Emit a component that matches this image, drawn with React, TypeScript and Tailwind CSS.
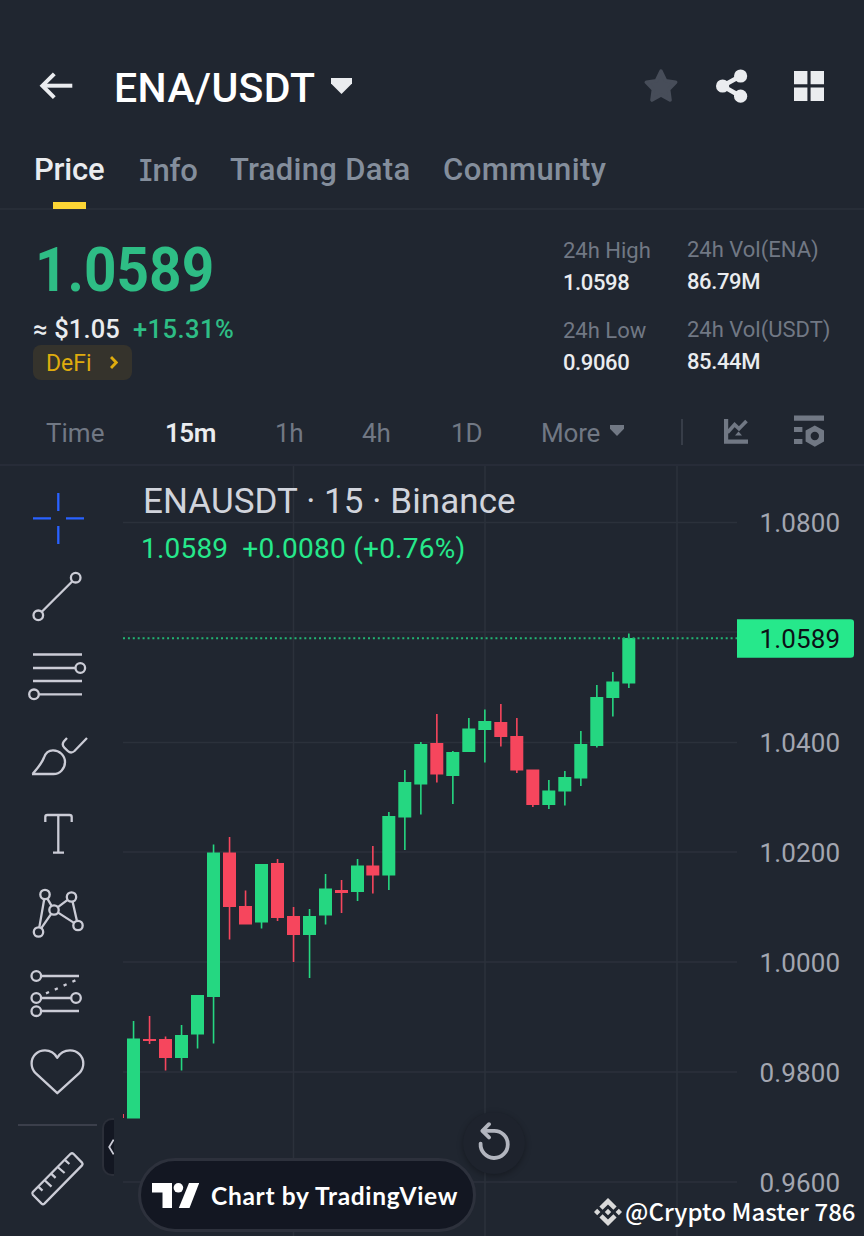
import React from "react";

type Candle = [x: number, top: number, bottom: number, high: number, low: number, up: 0 | 1];

const candles: Candle[] = [
  [133.5, 1038.5, 1118.5, 1021, 1118, 1],
  [149.5, 1039, 1041, 1016, 1044, 0],
  [165.5, 1039, 1058, 1036.5, 1070.5, 0],
  [181.5, 1035, 1058, 1025, 1070.5, 1],
  [197.5, 995, 1034.5, 995, 1048.5, 1],
  [213.5, 852.5, 997, 844.5, 1043.5, 1],
  [229.5, 852.5, 907, 837, 939.5, 0],
  [245.5, 906, 924.5, 890.5, 924, 0],
  [261.5, 864, 922.5, 864, 928.5, 1],
  [277.5, 863, 918, 859, 921, 0],
  [293.5, 916, 935, 907, 962, 0],
  [309.5, 916, 935, 909, 978, 1],
  [325.5, 888.5, 915.5, 874, 924.5, 1],
  [341.5, 890, 893, 880, 913, 0],
  [357.5, 865.5, 892, 859, 901, 1],
  [372.8, 865.5, 875.5, 846, 893.5, 0],
  [388.8, 816, 875.5, 812, 890, 1],
  [404.8, 782, 817.5, 770, 850, 1],
  [420.8, 744, 784.5, 742, 814.5, 1],
  [436.8, 743, 774.5, 714, 782.5, 0],
  [452.8, 752, 776, 751, 804, 1],
  [468.8, 728.5, 752, 718, 752, 1],
  [484.8, 721, 730, 709.5, 762.5, 1],
  [500.8, 722, 737, 704, 746.5, 0],
  [516.8, 736, 770.5, 718, 773, 0],
  [532.8, 769.5, 805, 770, 807, 0],
  [548.8, 790.5, 805, 780, 809, 1],
  [564.8, 777, 791.5, 771, 805.5, 1],
  [580.8, 744, 778.5, 731, 786, 1],
  [596.8, 697, 746, 685, 747.5, 1],
  [612.8, 681.5, 698, 672, 716.5, 1],
  [628.8, 638, 683.5, 633.5, 688, 1],
];

const levels: [number, string][] = [
  [522.5, "1.0800"],
  [632, ""],
  [742.5, "1.0400"],
  [852, "1.0200"],
  [962, "1.0000"],
  [1072, "0.9800"],
  [1182, "0.9600"],
];

function Caret({ className }: { className: string }) {
  return (
    <svg viewBox="0 0 21 16" preserveAspectRatio="none" className={className} fill="currentColor">
      <path d="M0 0H21V5.4L10.5 16L0 5.4Z" />
    </svg>
  );
}

function Header() {
  return (
    <div className="flex h-[118px] shrink-0 items-center pt-[53px] text-[#eaecef]">
      <svg viewBox="0 0 34 28" className="ml-[39px] h-[28px] w-[34px]" fill="none" stroke="currentColor" strokeWidth="4">
        <path d="M3 13.7H33.3" />
        <path d="M15.3 1.8L3.4 13.7L15.3 25.6" />
      </svg>
      <h1 className="ml-[41px] mt-[4px] w-[204px] whitespace-nowrap text-[41px] font-medium leading-[48px] tracking-[0.4px] text-white">
        ENA/USDT
      </h1>
      <Caret className="ml-[13px] h-[16px] w-[21px]" />
      <svg viewBox="0 0 34 34" className="ml-[292px] h-[34px] w-[34px] text-[#474d59]" fill="currentColor" stroke="currentColor" strokeWidth="3.6" strokeLinejoin="round">
        <path d="M17 2.2L21.6 11.8L31.6 13.2L24.6 20.4L26 31L17 26L8 31L9.4 20.4L2.4 13.2L12.4 11.8Z" />
      </svg>
      <svg viewBox="0 0 32 34" className="ml-[38px] h-[34px] w-[32px]" fill="currentColor">
        <path d="M24.6 7L6.6 17L24.6 27.2" fill="none" stroke="currentColor" strokeWidth="4.6" />
        <circle cx="24.6" cy="7" r="6.6" />
        <circle cx="6.6" cy="17" r="6.6" />
        <circle cx="24.6" cy="27.2" r="6.6" />
      </svg>
      <svg viewBox="0 0 30 30" className="ml-[46px] h-[30px] w-[30px]" fill="currentColor">
        <path d="M0 0H13.4V13.2H0ZM16.6 0H30V13.2H16.6ZM0 16.6H13.4V30H0ZM16.6 16.6H30V30H16.6Z" />
      </svg>
    </div>
  );
}

function Tabs() {
  return (
    <nav className="flex h-[92px] shrink-0 border-b-2 border-[#272d37] pl-[35px] pt-[32px] text-[31px] font-medium leading-[40px] text-[#848e9c]">
      <div className="relative w-[104px] text-[#eaecef]">
        <span className="-ml-px tracking-[-0.2px]">Price</span>
        <span className="absolute left-[18px] top-[52px] h-[7px] w-[33px] bg-[#fcd535]" />
      </div>
      <div className="w-[91px] tracking-[-0.2px]">
        <span className="font-[Inter] text-[30px] [font-feature-settings:'cv08']">I</span>nfo
      </div>
      <div className="w-[213px] tracking-[0.3px]">Trading Data</div>
      <div className="tracking-[0.4px]">Community</div>
    </nav>
  );
}

function Stat({ label, value }: { label: string; value: string }) {
  return (
    <div className="text-[22px]">
      <div className="whitespace-nowrap leading-[30px] text-[#717884]">{label}</div>
      <div className="font-medium leading-[33px] tracking-[-0.4px] text-[#eaecef]">{value}</div>
    </div>
  );
}

function Summary() {
  return (
    <section className="flex h-[190px] shrink-0">
      <div className="w-[563px] pl-[33px] pt-[30px]">
        <div className="ml-[2px] w-[195px] origin-left scale-x-[0.93] text-[61px] font-bold leading-[60px] text-[#2ebd85]">
          1.0589
        </div>
        <div className="mt-[14px] flex gap-[12px] text-[25.5px] font-medium leading-[30px]">
          <span className="w-[88px] whitespace-nowrap tracking-[0.15px] text-[#eaecef]">≈ $1.05</span>
          <span className="tracking-[0.45px] text-[#2ebd85]">+15.31%</span>
        </div>
        <div className="mt-[1px] flex h-[35px] w-[99px] items-center rounded-[8px] bg-[#35332c] pl-[13px] text-[23px] leading-[35px] text-[#dfac0e]">
          <span className="mt-px w-[64px]">DeFi</span>
          <svg viewBox="0 0 8 13" className="h-[13px] w-[8px]" fill="none" stroke="currentColor" strokeWidth="2.8">
            <path d="M1 1L6.2 6.5L1 12" />
          </svg>
        </div>
      </div>
      <div className="flex w-[124px] flex-col gap-[17px] pt-[26px]">
        <Stat label="24h High" value="1.0598" />
        <Stat label="24h Low" value="0.9060" />
      </div>
      <div className="flex flex-col gap-[17px] pt-[25px]">
        <Stat label="24h Vol(ENA)" value="86.79M" />
        <Stat label="24h Vol(USDT)" value="85.44M" />
      </div>
    </section>
  );
}

function Intervals() {
  return (
    <div className="flex h-[66px] shrink-0 items-center border-b-2 border-[#272c38] pl-[46px] pt-[2px] text-[26px] leading-[30px] text-[#717884]">
      <span className="w-[119px]">Time</span>
      <span className="w-[110px] font-semibold tracking-[-0.5px] text-[#eaecef]">15m</span>
      <span className="w-[87px] tracking-[-0.3px]">1h</span>
      <span className="w-[89px]">4h</span>
      <span className="w-[90px]">1D</span>
      <span className="w-[69px] tracking-[-0.2px]">More</span>
      <Caret className="mb-[5px] h-[11px] w-[14px]" />
      <span className="mb-[3px] ml-[57px] h-[26px] w-[2px] bg-[#373d48]" />
      <svg viewBox="0 0 24 25" className="mb-[4px] ml-[41px] h-[25px] w-[24px]" fill="none" stroke="currentColor" strokeWidth="3.6">
        <path d="M2.1 0V22.6H24" strokeWidth="4.2" />
        <path d="M3.5 13.5L10.6 5.6L15 9.8L22.5 2" />
        <path d="M11 16.6L14.5 12.4L18 16.6Z" fill="currentColor" stroke="none" />
      </svg>
      <svg viewBox="0 0 30 32" className="mb-[4px] ml-[46px] h-[32px] w-[30px]" fill="currentColor">
        <path d="M0 0.5H30V5.8H0ZM0 12H8.4V17H0ZM0 24H8.4V29H0Z" />
        <path fillRule="evenodd" d="M20.8 10.4L30 15.6V26.4L20.8 31.8L11.6 26.4V15.6ZM20.8 16.8a4.2 4.2 0 1 0 0 8.4a4.2 4.2 0 1 0 0 -8.4Z" />
      </svg>
    </div>
  );
}

function Tool({ y, children }: { y: number; children: React.ReactNode }) {
  return (
    <svg viewBox={`0 ${y} 122 79`} className="h-[79px] w-[122px] shrink-0" fill="none" stroke="#cbccd6" strokeWidth="2.3">
      {children}
    </svg>
  );
}

function Toolbar() {
  return (
    <aside className="relative flex w-[122px] shrink-0 flex-col pt-[13px]">
      <Tool y={479}>
        <path stroke="#2962ff" d="M58.3 493V511M58.3 526V544M33 518.3H51M66 518.3H84" />
      </Tool>
      <Tool y={558}>
        <path d="M41.8 611.8L72.4 581.2" />
        <circle cx="75.7" cy="577.7" r="4.8" />
        <circle cx="38.3" cy="615.3" r="4.8" />
      </Tool>
      <Tool y={637}>
        <path d="M33 654.5H82M33 668H75M33 681H82M39 694.3H82" />
        <circle cx="80.3" cy="668" r="4.8" />
        <circle cx="34" cy="694.3" r="4.8" />
      </Tool>
      <Tool y={716}>
        <path d="M32 774H53.5C60 774 65 768.5 65 762C65 755.5 59.5 750.3 53 750.3C48.5 750.3 45.5 753 44 757.5C41.5 764 37.5 768.5 32.5 774" />
        <path d="M67 738L63.8 741.5Q61.5 744.5 64.3 747.6L67.8 751Q71 754 74.5 751L87 738" />
      </Tool>
      <Tool y={795}>
        <path d="M45.3 822V817Q45.3 815 47.3 815H69.5Q71.7 815 71.7 817V822M58.3 815V852.6M53 852.6H64" />
      </Tool>
      <Tool y={874}>
        <path d="M39.3 927.4L44.2 899.2M47.4 898.6L51.6 905.8M57.9 907.2L67.6 899.9M72.6 901.7L76.9 920.8M58.1 912.6L74 922.9M51.2 913.9L41.3 928.2" />
        <circle cx="45" cy="894.5" r="4.7" />
        <circle cx="71.5" cy="897" r="4.7" />
        <circle cx="54" cy="910" r="4.7" />
        <circle cx="78" cy="925.5" r="4.7" />
        <circle cx="38.5" cy="932" r="4.7" />
      </Tool>
      <Tool y={953}>
        <path d="M41 976H79M41 998H71M41 1011H79" />
        <circle cx="36.3" cy="976" r="4.8" />
        <circle cx="36.3" cy="998" r="4.8" />
        <circle cx="76" cy="998" r="4.8" />
        <circle cx="36.3" cy="1011.2" r="4.8" />
        <path d="M46 993.4L49 992M54.8 989.6L57.8 988.2M63.6 985.6L66.6 984.2M72.4 981.8L75.4 980.4" />
      </Tool>
      <Tool y={1032}>
        <path strokeLinejoin="round" d="M57.3 1057.8C54.5 1053 50 1050.4 45 1050.4C37.5 1050.4 31.6 1056 31.6 1063.5C31.6 1067.3 33 1070.6 35.6 1073.2L57.3 1093.2L79.3 1073.2C81.9 1070.6 83.3 1067.3 83.3 1063.5C83.3 1056 77.3 1050.4 70 1050.4C64.8 1050.4 60 1053 57.3 1057.8Z" />
      </Tool>
      <div className="ml-[18px] mt-[13px] h-[2px] w-[79px] shrink-0 bg-[#3b3f4b]" />
      <div className="h-[13px] shrink-0" />
      <Tool y={1139}>
        <path strokeLinejoin="round" d="M70.6 1153.8Q72 1152.6 73.4 1153.8L82 1162.6Q83.2 1164 82 1165.4L44.4 1203.6Q43 1204.8 41.6 1203.6L32.8 1194.8Q31.6 1193.4 32.8 1192Z" />
        <path d="M38.2 1186.6L42.5 1190.6M44.4 1180L51.5 1186.6M51.2 1173.6L55.6 1177.8M57.6 1167L64.6 1173M64.8 1159.8L69.4 1164" />
      </Tool>
      <div className="absolute left-[102px] top-[652px] flex h-[58px] w-[12px] items-center justify-end overflow-hidden rounded-l-[10px] border-y-2 border-l-2 border-[#2b2f39] bg-[#131722]">
        <svg viewBox="0 0 6 16" className="h-[16px] w-[6px]" fill="none" stroke="#cbccd6" strokeWidth="1.8">
          <path d="M5.6 0.6L1.2 8L5.6 15.4" />
        </svg>
      </div>
    </aside>
  );
}

function Plot() {
  return (
    <svg viewBox="122 466 742 770" className="block h-[770px] w-[742px]">
      <g stroke="#2b313b" strokeWidth="1.6">
        {levels.map(([y]) => (
          <line key={y} x1="123" x2="737" y1={y} y2={y} />
        ))}
        {[293.5, 485, 677].map((x) => (
          <line key={x} x1={x} x2={x} y1="466" y2="1236" />
        ))}
      </g>
      <rect x="123" y="1114" width="1" height="4" fill="#f6465d" />
      {candles.map(([x, top, bottom, high, low, up]) => (
        <g key={x} fill={up ? "#25d781" : "#f6465d"}>
          <rect x={x - 0.75} y={high} width="1.6" height={low - high} />
          <rect x={x - 6.5} y={top} width="13" height={bottom - top} />
        </g>
      ))}
      <line x1="123" x2="737" y1="638.3" y2="638.3" stroke="#22b573" strokeWidth="2" strokeDasharray="2 2.9" />
      <g fontSize="26" fill="#a3a6b1" fontFamily="Roboto">
        {levels
          .filter(([, label]) => label)
          .map(([y, label]) => (
            <text key={y} x="759.5" y={y + 9.8} textLength="80.5">
              {label}
            </text>
          ))}
      </g>
      <path d="M737 619.3H850.5Q854 619.3 854 622.5V654.5Q854 657.8 850.5 657.8H737Z" fill="#26e88b" />
      <text x="759.5" y="648" fontSize="26" fill="#0c1116" fontFamily="Roboto" textLength="80.5">
        1.0589
      </text>
    </svg>
  );
}

function Chart() {
  return (
    <section className="relative flex h-[770px] shrink-0">
      <Toolbar />
      <Plot />
      <div className="absolute left-[142px] top-[15px] whitespace-nowrap">
        <div className="ml-px mt-px text-[35px] leading-[40px] tracking-[0.07px] text-[#d1d4dc]">ENAUSDT · 15 · Binance</div>
        <div className="-ml-px mt-[11px] flex gap-[14px] text-[28px] leading-[32px] text-[#26e88b]">
          <span className="tracking-[0.2px]">1.0589</span>
          <span className="tracking-[0.25px]">+0.0080 (+0.76%)</span>
        </div>
      </div>
      <div className="absolute left-[463px] top-[646px] flex h-[62px] w-[62px] items-center justify-center rounded-full bg-[#1e232d] shadow-[0_2px_6px_rgba(0,0,0,0.3)]">
        <svg viewBox="0 0 34 40" className="mb-[3px] h-[40px] w-[34px]" fill="none" stroke="#b2b5be" strokeWidth="3.8" strokeLinecap="round" strokeLinejoin="round">
          <path d="M3.6 21.6A13.6 13.6 0 1 0 16.8 8.8H6" />
          <path d="M12 2.2L5.4 8.8L12 15.4" />
        </svg>
      </div>
      <div className="absolute left-[138px] top-[692px] flex h-[74px] w-[338px] items-center rounded-full border-[3px] border-[#2d313c] bg-[#131722] pl-[11px] text-white">
        <svg viewBox="0 0 47 25" className="h-[25px] w-[47px]" fill="currentColor">
          <path d="M0 0H20V25H10.5V9.6H0Z" />
          <circle cx="26.4" cy="4.8" r="4.8" />
          <path d="M37 0H47.2L37.5 25H26.8Z" />
        </svg>
        <span className="ml-[12px] mt-[2px] whitespace-nowrap font-[Lato] text-[24.5px] font-bold leading-[30px] tracking-[0.7px]">Chart by TradingView</span>
      </div>
      <div className="absolute left-[594px] top-[732px] flex h-[28px] items-center whitespace-nowrap">
        <svg viewBox="0 0 28 28" className="h-[28px] w-[28px]" fill="#d9d9d9">
          <path d="M14 0L22.6 8.6L19.4 11.8L14 6.4L8.6 11.8L5.4 8.6Z" />
          <path d="M14 28L22.6 19.4L19.4 16.2L14 21.6L8.6 16.2L5.4 19.4Z" />
          <path d="M14 10.8L17.2 14L14 17.2L10.8 14ZM3.2 10.8L6.4 14L3.2 17.2L0 14ZM24.8 10.8L28 14L24.8 17.2L21.6 14Z" />
        </svg>
        <span className="mb-[2px] ml-[3px] font-['Noto_Sans_CJK_SC'] text-[24px] font-medium leading-[26px] tracking-[0.05px] text-white">@Crypto Master 786</span>
      </div>
    </section>
  );
}

export default function App() {
  return (
    <main className="flex h-[1236px] w-[864px] flex-col overflow-hidden bg-[#202630] font-[Roboto,sans-serif]">
      <Header />
      <Tabs />
      <Summary />
      <Intervals />
      <Chart />
    </main>
  );
}
